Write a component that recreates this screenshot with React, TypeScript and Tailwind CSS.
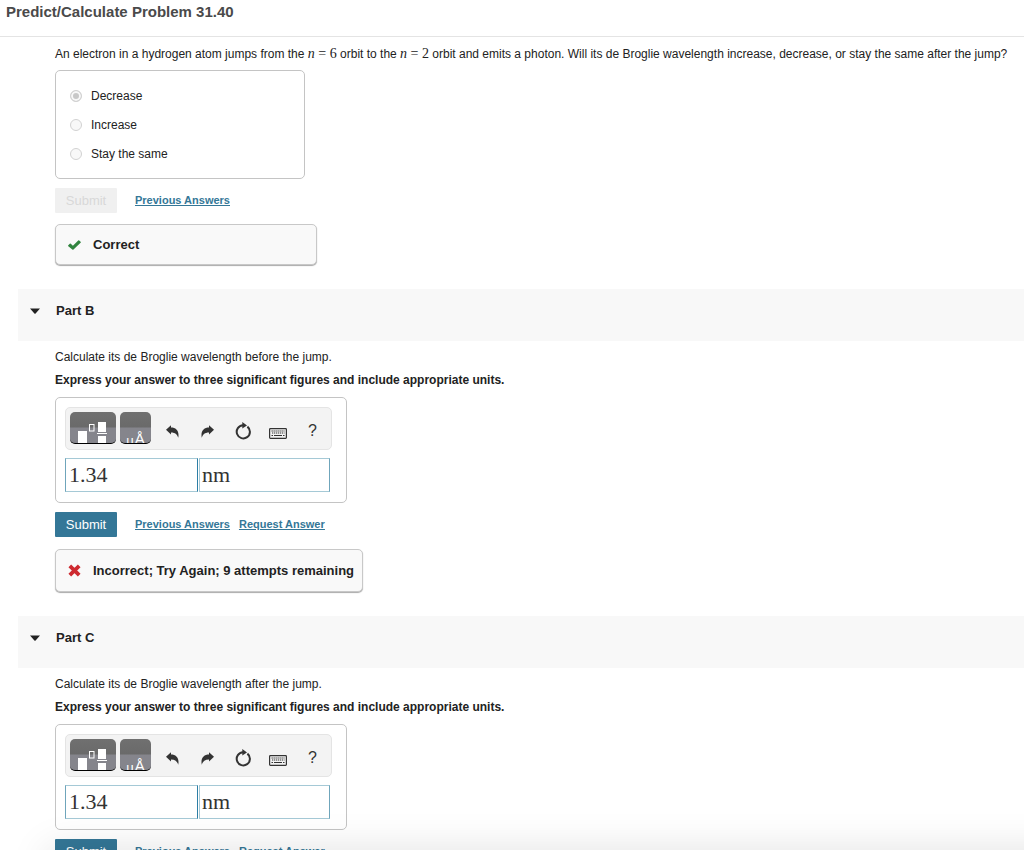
import type { ReactNode } from "react";

/* ─── Icons ─── */

function CaretIcon() {
  return (
    <svg width="10" height="6" viewBox="0 0 10 6" fill="currentColor" aria-hidden="true">
      <path d="M0 .5h10L5.6 5.4a.8.8 0 0 1-1.2 0z" />
    </svg>
  );
}

function CheckIcon() {
  return (
    <svg width="13" height="10" viewBox="0 0 13 10" fill="#31843f" aria-hidden="true">
      <path d="M.3 5.3 1.8 3.7q.5-.4 1 0L4.9 5.700 10.200.4q.5-.5 1 0l1.400 1.400q.5.5 0 1L5.500 9.600q-.6.5-1.200 0L.3 6.200q-.5-.4 0-.9z" />
    </svg>
  );
}

function CrossIcon() {
  return (
    <svg width="13" height="13" viewBox="0 0 13 13" aria-hidden="true">
      <path d="M1.800 1.800 11.200 11.200M11.200 1.800 1.800 11.200" stroke="#ce2a30" strokeWidth="3.800" fill="none" />
    </svg>
  );
}

function UndoIcon() {
  return (
    <svg width="13" height="13" viewBox="0 0 13 13" fill="currentColor" aria-hidden="true">
      <path d="M0 4.700 5 .2v2.200c5.200 0 8.600 3.600 7.200 10.400C11.400 9.600 9.400 7.400 5 7.400v2.200z" />
    </svg>
  );
}

function RedoIcon() {
  return (
    <svg width="13" height="13" viewBox="0 0 13 13" fill="currentColor" aria-hidden="true">
      <path d="M13 4.700 8 .2v2.200C2.800 2.400-.6 6 .8 12.800 1.600 9.600 3.600 7.400 8 7.400v2.200z" />
    </svg>
  );
}

function ResetIcon() {
  return (
    <svg width="16" height="18" viewBox="0 0 16 18" aria-hidden="true">
      <path d="M12.400 4.600A6.600 6.600 0 1 1 8 3.200" stroke="currentColor" strokeWidth="2" fill="none" />
      <path d="M7.300 0 12 3.500 7.300 6.500z" fill="currentColor" />
    </svg>
  );
}

function KeyboardIcon() {
  return (
    <svg width="18" height="15" viewBox="0 -4 18 15" fill="none" stroke="currentColor" aria-hidden="true">
      <rect x=".6" y=".6" width="16.800" height="9.800" rx=".8" strokeWidth="1.200" />
      <path d="M2.500 3h13M3 5h12.500" strokeWidth="1.200" strokeDasharray="1.300 .7" />
      <path d="M2.500 7.500h1.500M5 7.500h8M14 7.500h1.500" strokeWidth="1.200" />
    </svg>
  );
}

function TemplateIcon() {
  return (
    <svg width="46" height="32" viewBox="0 0 46 32" fill="#fff" aria-hidden="true">
      <rect x="8" y="19" width="9" height="12" />
      <rect x="19.500" y="12.500" width="4.500" height="6.500" fill="none" stroke="#fff" />
      <rect x="28" y="10" width="8" height="10" />
      <rect x="27" y="21" width="10" height="1" />
      <rect x="28" y="24" width="8" height="7" />
    </svg>
  );
}

/* ─── Shared pieces ─── */

function PartHeader({ title }: { title: string }) {
  return (
    <header className="ml-[18px] h-[52px] bg-[#f8f8f8] pt-3">
      <button type="button" className="flex items-center gap-4 pl-3 text-[13px] leading-5 font-bold text-[#222]">
        <CaretIcon />
        <h2>{title}</h2>
      </button>
    </header>
  );
}

function Actions({ children, disabled = false }: { children: ReactNode; disabled?: boolean }) {
  return (
    <div className="mt-[9px] flex items-start">
      <button
        type="button"
        disabled={disabled}
        className="h-[25px] w-[62px] rounded-[1px] bg-[#347797] text-[13px] leading-6 text-white disabled:bg-[#f0f0f0] disabled:text-[#d8d8d8]"
      >
        Submit
      </button>
      <div className="ml-[18px] flex gap-[9px] text-[11px] leading-6 font-bold text-[#347797] underline">
        {children}
      </div>
    </div>
  );
}

function Feedback({ icon, children, className }: { icon: ReactNode; children: ReactNode; className: string }) {
  return (
    <div
      role="status"
      className={`flex items-center gap-3 rounded-[5px] border border-[#c8c8c8] bg-[#f9f9f9] pl-3 text-[13px] font-bold text-[#222] shadow-[0px_1px_1px_#aaa] ${className}`}
    >
      {icon}
      <p>{children}</p>
    </div>
  );
}

function ToolButton({ label, children }: { label: string; children: ReactNode }) {
  return (
    <button
      type="button"
      aria-label={label}
      className="flex h-8 w-[35px] shrink-0 items-center justify-center text-[#333]"
    >
      {children}
    </button>
  );
}

const paletteButton =
  "h-8 shrink-0 overflow-hidden rounded-[5px] border-b border-black bg-linear-to-b from-[#707070] from-0% via-[#6a6a6a] via-48% to-[#85858c] to-52% text-white";

function AnswerEditor({ id }: { id: string }) {
  return (
    <div className="mt-[9px] w-[292px] rounded-[5px] border border-[#c4c4c4] pt-[9px] pr-[14px] pb-[10px] pl-[9px]">
      <div
        role="toolbar"
        className="flex h-[43px] items-start rounded-[5px] border border-[#e4e4e4] bg-[#f3f3f3] px-1 pt-1"
      >
        <button type="button" aria-label="Templates" className={`mr-1 w-[46px] ${paletteButton}`}>
          <TemplateIcon />
        </button>
        <button
          type="button"
          aria-label="Symbols"
          className={`mr-1 flex w-[31px] items-end justify-center gap-px ${paletteButton}`}
        >
          <span className="text-[13px] leading-1">μ</span>
          <span className="text-[15px] leading-2">Å</span>
        </button>
        <div className="flex pt-[3px]">
          <ToolButton label="Undo">
            <UndoIcon />
          </ToolButton>
          <ToolButton label="Redo">
            <RedoIcon />
          </ToolButton>
          <ToolButton label="Reset">
            <ResetIcon />
          </ToolButton>
          <ToolButton label="Keyboard shortcuts">
            <KeyboardIcon />
          </ToolButton>
          <ToolButton label="Help">
            <span className="text-[16px] leading-4">?</span>
          </ToolButton>
        </div>
      </div>
      <div className="mt-2 mr-[2px] flex gap-px font-['Liberation_Serif',serif] text-[22px] text-[#333]">
        <input
          id={`${id}-value`}
          aria-label="Value"
          defaultValue="1.34"
          className="h-[34px] w-0 flex-1 border border-y-[#a5c9d6] border-r-[#2d7fa6] border-l-[#6fa5bb] px-[3px]"
        />
        <input
          id={`${id}-units`}
          aria-label="Units"
          defaultValue="nm"
          className="h-[34px] w-0 flex-1 border border-y-[#a5c9d6] border-r-[#6fa5bb] border-l-[#a5c9d6] px-[2px]"
        />
      </div>
    </div>
  );
}

function Equation({ value }: { value: number }) {
  return (
    <span className="font-['Liberation_Serif',serif] text-[14px] leading-4 whitespace-nowrap">
      <i>n</i> = {value}
    </span>
  );
}

/* ─── Parts ─── */

const choices = ["Decrease", "Increase", "Stay the same"];

function PartA() {
  return (
    <section className="pt-[9px] pb-6">
      <div className="pl-[55px] text-[12px] leading-4">
        <p>
          An electron in a hydrogen atom jumps from the <Equation value={6} /> orbit to the <Equation value={2} /> orbit
          and emits a photon. Will its de Broglie wavelength increase, decrease, or stay the same after the jump?
        </p>
        <fieldset className="mt-2 flex w-[250px] flex-col gap-[13px] rounded-[5px] border border-[#c4c4c4] px-[14px] pt-[17px] pb-4">
          {choices.map((choice, i) => (
            <label key={choice} className="flex items-center gap-[9px]">
              <input
                type="radio"
                name="wavelength"
                disabled
                defaultChecked={i === 0}
                className="size-3 appearance-none rounded-full border border-[#d2d2d2] bg-[#f8f8f8] checked:bg-[#c8c8c8] checked:shadow-[inset_0_0_0_2px_#f8f8f8]"
              />
              {choice}
            </label>
          ))}
        </fieldset>
        <Actions disabled>
          <a href="#previous-a">Previous Answers</a>
        </Actions>
        <Feedback icon={<CheckIcon />} className="mt-[11px] h-[41px] w-[262px]">
          Correct
        </Feedback>
      </div>
    </section>
  );
}

function NumericPart({ id, title, question }: { id: string; title: string; question: string }) {
  return (
    <section className="pb-6">
      <PartHeader title={title} />
      <div className="pt-2 pl-[55px] text-[12px] leading-4">
        <p>{question}</p>
        <p className="mt-[7px] font-bold">Express your answer to three significant figures and include appropriate units.</p>
        <AnswerEditor id={id} />
        <Actions>
          <a href={`#previous-${id}`}>Previous Answers</a>
          <a href={`#request-${id}`}>Request Answer</a>
        </Actions>
        <Feedback icon={<CrossIcon />} className="mt-3 h-[43px] w-[308px]">
          Incorrect; Try Again; 9 attempts remaining
        </Feedback>
      </div>
    </section>
  );
}

export default function App() {
  return (
    <div className="h-screen overflow-hidden bg-white font-['Liberation_Sans',Arial,sans-serif] text-[#222]">
      <header className="h-[37px] border-b border-[#e4e4e4] pl-1.5">
        <h1 className="text-[15px] leading-6 font-bold text-[#4a4a4a]">Predict/Calculate Problem 31.40</h1>
      </header>
      <main>
        <PartA />
        <NumericPart id="b" title="Part B" question="Calculate its de Broglie wavelength before the jump." />
        <NumericPart id="c" title="Part C" question="Calculate its de Broglie wavelength after the jump." />
      </main>
      {/* Shadow cast up from the bottom edge of the window */}
      <div className="pointer-events-none fixed top-full -right-12 left-12 h-10 shadow-[0_0_40px_rgba(0,0,0,0.12)]" />
    </div>
  );
}
